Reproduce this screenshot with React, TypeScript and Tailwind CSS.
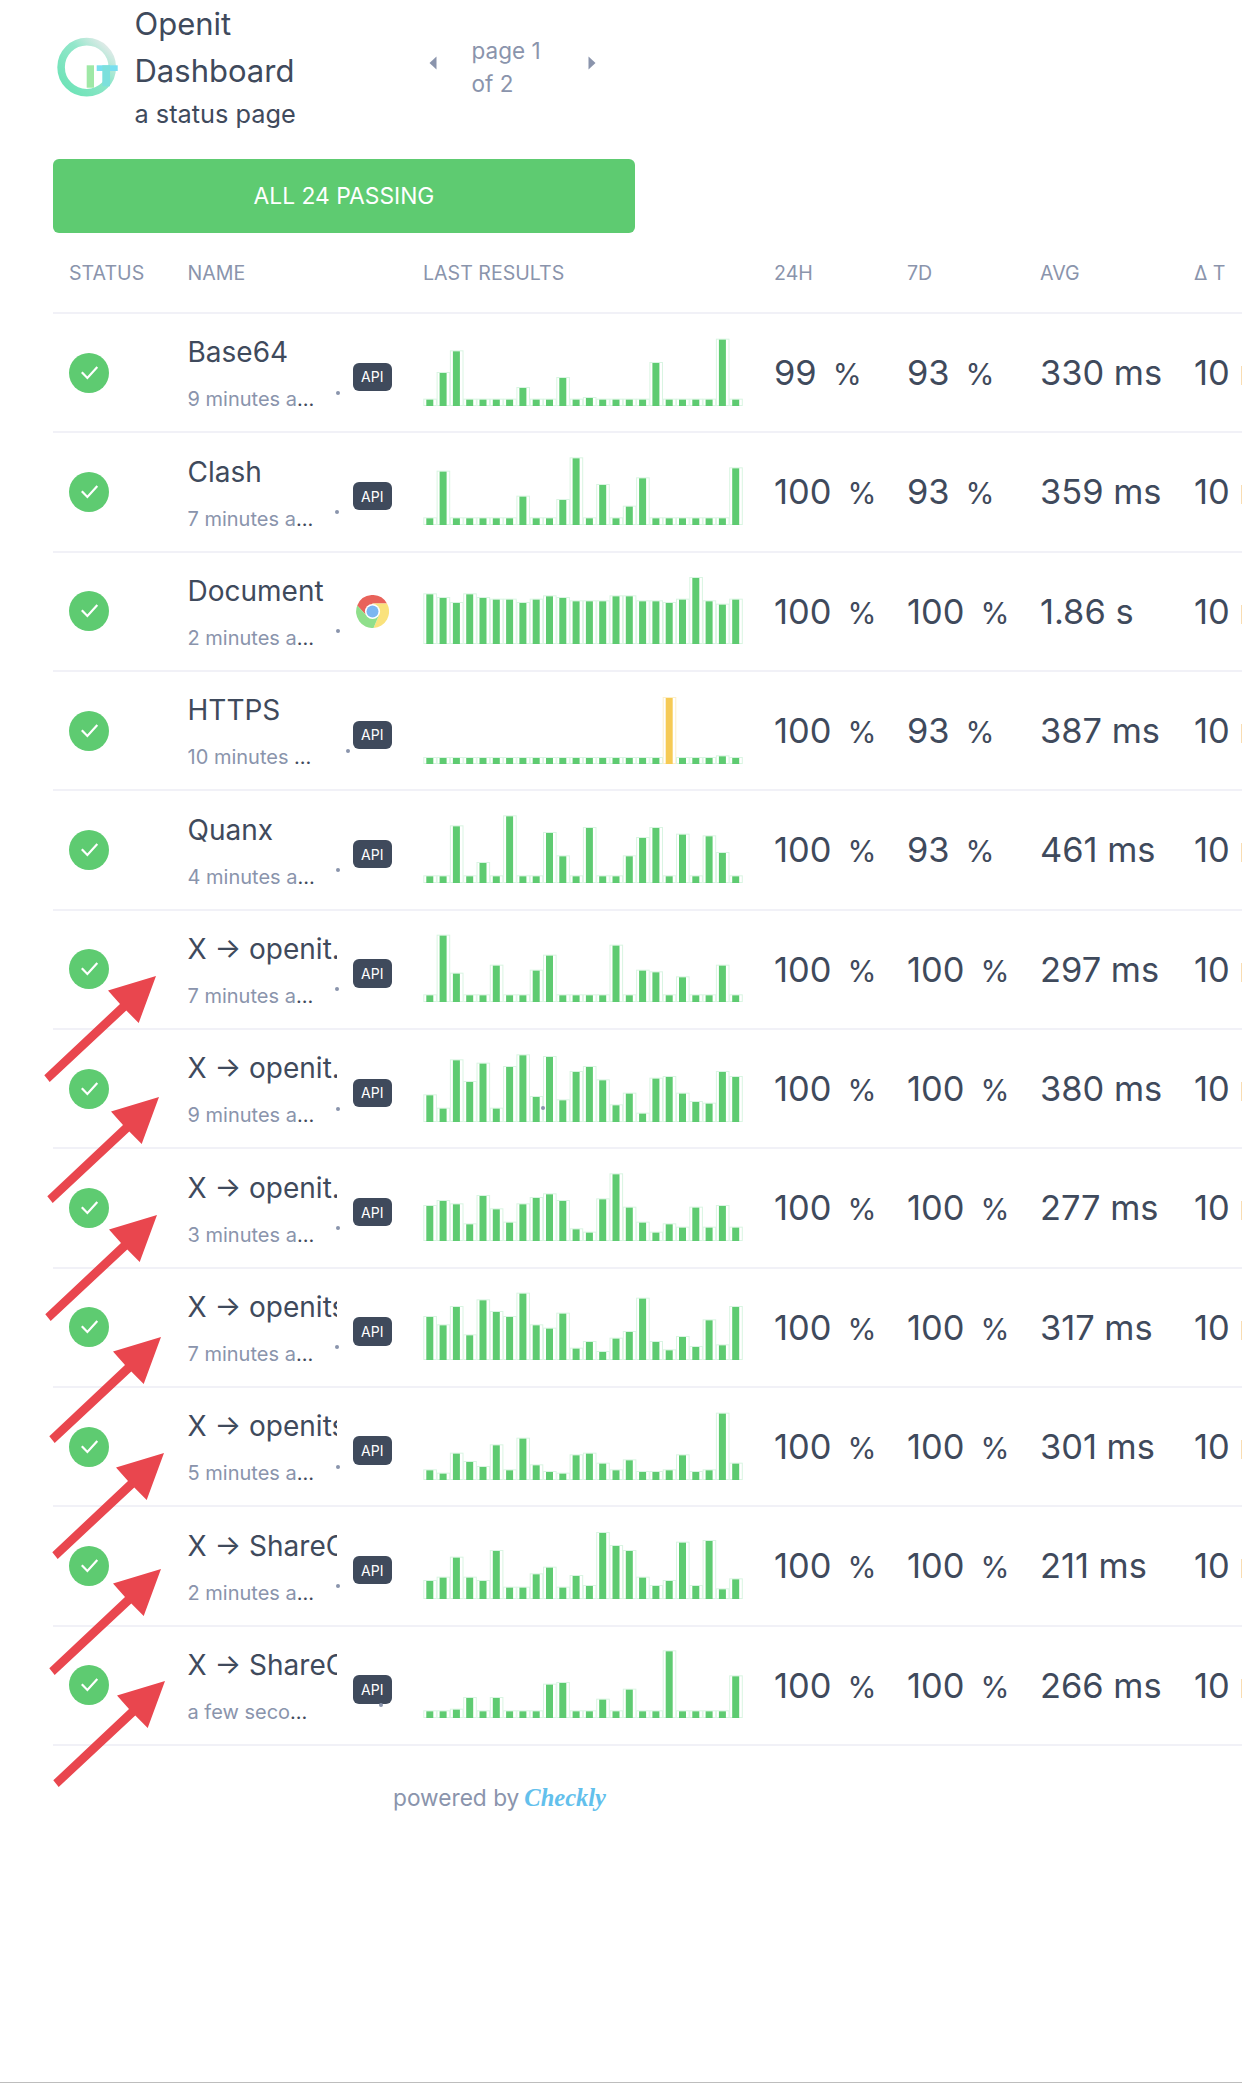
import React from "react";

type Check = {
  name: string;
  ago: string;
  dot: number;
  day: string;
  week: string;
  avg: string;
  bars: number[];
  browser?: boolean;
  slow?: number;
};

// bar heights are in thirds of a pixel
const checks: Check[] = [
  {
    name: "Base64",
    ago: "9 minutes ago",
    dot: 338.3,
    day: "99",
    week: "93",
    avg: "330 ms",
    bars: [19, 99, 164, 19, 19, 19, 19, 54, 19, 19, 84, 19, 24, 19, 19, 19, 19, 129, 19, 19, 19, 19, 199, 19],
  },
  {
    name: "Clash",
    ago: "7 minutes ago",
    dot: 337,
    day: "100",
    week: "93",
    avg: "359 ms",
    bars: [20, 160, 20, 20, 20, 20, 20, 85, 20, 20, 75, 200, 20, 120, 20, 55, 140, 20, 20, 20, 20, 20, 20, 170],
  },
  {
    name: "Document",
    ago: "2 minutes ago",
    dot: 337.7,
    day: "100",
    week: "100",
    avg: "1.86 s",
    browser: true,
    bars: [149, 138, 123, 149, 138, 133, 133, 123, 133, 143, 138, 128, 128, 128, 143, 143, 128, 128, 123, 133, 198, 128, 118, 133],
  },
  {
    name: "HTTPS",
    ago: "10 minutes ago",
    dot: 348,
    day: "100",
    week: "93",
    avg: "387 ms",
    slow: 18,
    bars: [18, 18, 18, 18, 18, 18, 18, 18, 18, 18, 18, 18, 18, 18, 18, 18, 18, 18, 198, 18, 18, 18, 23, 18],
  },
  {
    name: "Quanx",
    ago: "4 minutes ago",
    dot: 338,
    day: "100",
    week: "93",
    avg: "461 ms",
    bars: [20, 20, 170, 20, 60, 20, 200, 20, 20, 150, 80, 20, 165, 20, 20, 80, 135, 165, 20, 145, 20, 140, 90, 20],
  },
  {
    name: "X → openit.one",
    ago: "7 minutes ago",
    dot: 337,
    day: "100",
    week: "100",
    avg: "297 ms",
    bars: [20, 199, 85, 20, 20, 109, 20, 20, 94, 139, 20, 20, 20, 20, 169, 20, 94, 89, 20, 74, 20, 20, 109, 20],
  },
  {
    name: "X → openit.two",
    ago: "9 minutes ago",
    dot: 338.3,
    day: "100",
    week: "100",
    avg: "380 ms",
    bars: [80, 40, 185, 120, 175, 40, 165, 200, 75, 195, 65, 150, 165, 125, 50, 85, 25, 130, 135, 85, 60, 55, 150, 135],
  },
  {
    name: "X → openit.xyz",
    ago: "3 minutes ago",
    dot: 338,
    day: "100",
    week: "100",
    avg: "277 ms",
    bars: [105, 120, 110, 50, 135, 95, 55, 110, 129, 140, 120, 35, 25, 125, 200, 100, 55, 25, 50, 40, 100, 40, 105, 40],
  },
  {
    name: "X → openits.one",
    ago: "7 minutes ago",
    dot: 337,
    day: "100",
    week: "100",
    avg: "317 ms",
    bars: [129, 104, 159, 74, 179, 144, 129, 199, 104, 94, 139, 34, 54, 24, 64, 84, 184, 54, 29, 69, 39, 119, 44, 159],
  },
  {
    name: "X → openits.two",
    ago: "5 minutes ago",
    dot: 338,
    day: "100",
    week: "100",
    avg: "301 ms",
    bars: [29, 19, 79, 54, 39, 104, 29, 124, 44, 24, 19, 74, 79, 49, 29, 59, 24, 24, 29, 74, 24, 29, 199, 49],
  },
  {
    name: "X → ShareCuts",
    ago: "2 minutes ago",
    dot: 337.7,
    day: "100",
    week: "100",
    avg: "211 ms",
    bars: [54, 64, 124, 64, 54, 144, 34, 34, 74, 94, 34, 69, 39, 198, 159, 144, 64, 39, 54, 169, 39, 174, 29, 59],
  },
  {
    name: "X → ShareCuts",
    ago: "a few seconds ago",
    dot: 380.7,
    day: "100",
    week: "100",
    avg: "266 ms",
    bars: [20, 20, 25, 60, 20, 60, 20, 20, 20, 100, 105, 20, 20, 55, 20, 85, 20, 20, 200, 20, 20, 20, 20, 125],
  },
];

const arrowTips = [
  [155.7, 975.7],
  [159, 1096.7],
  [157, 1215],
  [160.7, 1337.3],
  [163.7, 1453.3],
  [160.7, 1569.3],
  [165, 1681],
];

const columns = "grid grid-cols-[134.5px_235.5px_351px_133px_133px_154px_100px]";

const Logo = () => (
  <svg width="62" height="62" viewBox="0 0 62 62" className="shrink-0">
    <defs>
      <linearGradient id="ring" gradientUnits="userSpaceOnUse" x1="10" y1="52" x2="54" y2="8">
        <stop offset="0" stopColor="#6ee3b7" />
        <stop offset="0.6" stopColor="#93e7cb" />
        <stop offset="1" stopColor="#e8ebeb" />
      </linearGradient>
    </defs>
    <circle cx="30.7" cy="30.2" r="25.6" fill="none" stroke="url(#ring)" strokeWidth="7.6" />
    <rect x="30.7" y="28.3" width="7.3" height="22.4" fill="#9fe8a6" />
    <rect x="40.7" y="28.3" width="21" height="5.7" fill="#79dff0" />
    <rect x="46.3" y="28.3" width="7.7" height="21" fill="#7ce0dc" />
  </svg>
);

const ChromeIcon = () => (
  <svg width="33" height="33" viewBox="0 0 33 33">
    <path d="M1.2 10.5A16.5 16.5 0 0 1 31 8.5H16.5L10 20Z" fill="#e8625a" />
    <path d="M31 8.5A16.5 16.5 0 0 1 17.5 33L23 20 16.5 8.5Z" fill="#fae27c" />
    <path d="M1.2 10.5L10 20H23L17.5 33A16.5 16.5 0 0 1 1.2 10.5Z" fill="#8fdf8b" />
    <circle cx="16.5" cy="16.5" r="7.6" fill="#ffffff" />
    <circle cx="16.5" cy="16.5" r="6" fill="#7bb6f1" />
  </svg>
);

const StatusIcon = () => (
  <svg width="40" height="40" viewBox="0 0 40 40">
    <circle cx="20" cy="20" r="20" fill="#5ecb71" />
    <path d="M12.8 19.2L18.4 25L28.3 14" fill="none" stroke="#ffffff" strokeWidth="2.2" />
  </svg>
);

const Bars = ({ bars, slow }: { bars: number[]; slow?: number }) => (
  <svg width="320" height="70" viewBox="0 0 320 70">
    {bars.map((value, i) => {
      const height = value / 3;
      const isSlow = slow !== undefined && value > 100;
      return (
        <g key={i}>
          <rect
            x={i * 13.3 + 0.8}
            y={70 - height - 0.5}
            width={12.6}
            height={height}
            fill="#ffffff"
            stroke={isSlow ? "#fdefc8" : "#d9f5e2"}
          />
          <rect
            x={i * 13.3 + 3.3}
            y={70 - height}
            width={7}
            height={height}
            fill={isSlow ? "#f6ca54" : "#5ecb71"}
          />
        </g>
      );
    })}
  </svg>
);

const Arrow = ({ tip }: { tip: number[] }) => (
  <svg
    width="112"
    height="107"
    viewBox="0 0 112 107"
    className="absolute"
    style={{ left: tip[0] - 112, top: tip[1] }}
  >
    <polygon
      points="112,0 64,14.5 76,28 0.3,99.3 5.7,106 82.3,34.5 94.7,47"
      fill="#e9464e"
    />
  </svg>
);

const Row = ({ check }: { check: Check }) => (
  <div className={`${columns} relative h-[119.33px] items-center border-b-2 border-[#f1f1f7]`}>
    <div className="pl-4">
      <StatusIcon />
    </div>
    <div className="flex items-center">
      <div className="w-[149.5px]">
        <div className="overflow-hidden whitespace-nowrap text-[28px] leading-[42px]">
          {check.name}
        </div>
        <div className="mt-[11px] w-[130px] overflow-hidden text-ellipsis whitespace-nowrap text-[20px] leading-[30px]">
          <span className="text-[#8a94ac]">{check.ago}</span>
        </div>
      </div>
      {check.browser ? (
        <div className="ml-[18.5px]">
          <ChromeIcon />
        </div>
      ) : (
        <div className="ml-[16px] mt-2 flex h-[28.4px] w-[38.5px] items-center justify-center rounded-[6px] bg-[#3f4a5c] text-[14px] text-white">
          API
        </div>
      )}
    </div>
    <div className="mt-[-4px]">
      <Bars bars={check.bars} slow={check.slow} />
    </div>
    <div className="flex items-baseline">
      <span className="text-[34.4px]">{check.day}</span>
      <span className="ml-[16px] text-[29.5px]">%</span>
    </div>
    <div className="flex items-baseline">
      <span className="text-[34.4px]">{check.week}</span>
      <span className="ml-[16px] text-[29.5px]">%</span>
    </div>
    <div className="whitespace-nowrap text-[34.4px]">{check.avg}</div>
    <div className="whitespace-nowrap text-[34.4px]">10 ms</div>
    <span
      className="absolute top-[76.7px] h-[4px] w-[4px] rounded-full bg-[#8a94ac]"
      style={{ left: check.dot - 55 }}
    />
  </div>
);

const headers = ["STATUS", "NAME", "LAST RESULTS", "24H", "7D", "AVG", "Δ T"];

const App = () => {
  return (
    <div className="relative flex h-[2089px] w-[1242px] flex-col overflow-hidden bg-white text-[#3f4a5c] [font-family:Inter,sans-serif]">
      <header className="flex h-[159.3px] shrink-0 pl-[56px]">
        <div className="mt-[36.5px]">
          <Logo />
        </div>
        <div className="ml-[16.5px] w-[200px]">
          <div className="text-[31px] leading-[47px]">
            Openit
            <br />
            Dashboard
          </div>
          <div className="mt-[2px] whitespace-nowrap text-[25.3px] leading-[36px]">a status page</div>
        </div>
        <div className="ml-[94px] mt-[35px] flex text-[22.5px] leading-[32.7px] text-[#8a94ac]">
          <svg width="8" height="14" viewBox="0 0 8 14" className="mt-[21px]">
            <polygon points="7.5,0.5 7.5,13.5 0.5,7" fill="#8a94ac" />
          </svg>
          <div className="ml-[35px] w-[116px]">
            page 1
            <br />
            of 2
          </div>
          <svg width="8" height="14" viewBox="0 0 8 14" className="mt-[21px]">
            <polygon points="0.5,0.5 0.5,13.5 7.5,7" fill="#8a94ac" />
          </svg>
        </div>
      </header>

      <div className="ml-[53px] flex h-[73.4px] w-[582px] shrink-0 items-center justify-center rounded-[6px] bg-[#5ecb71] text-[22.8px] text-white">
        ALL 24 PASSING
      </div>

      <div className="ml-[53px] w-[1189px] shrink-0">
        <div className={`${columns} h-[81.4px] items-center border-b-2 border-[#f1f1f7] pt-[2px] text-[19.6px] text-[#8a94ac]`}>
          {headers.map((title, i) => (
            <div key={title} className={i === 0 ? "pl-4" : ""}>
              {title}
            </div>
          ))}
        </div>
        {checks.map((check, i) => (
          <Row key={i} check={check} />
        ))}
      </div>

      <footer className="ml-[393px] mt-[35px] flex items-baseline text-[22.7px] text-[#8a94ac]">
        powered by
        <span className="ml-[5px] text-[24.5px] font-bold italic leading-none text-[#63c0ec] [font-family:'Liberation_Serif',serif]">
          Checkly
        </span>
      </footer>

      <div className="mb-[6px] mt-auto h-px bg-[#bdbdbd]" />

      <span className="absolute left-[541px] top-[1106px] h-[4px] w-[4px] rounded-full bg-[#8a94ac]" />

      {arrowTips.map((tip, i) => (
        <Arrow key={i} tip={tip} />
      ))}
    </div>
  );
};

export default App;
